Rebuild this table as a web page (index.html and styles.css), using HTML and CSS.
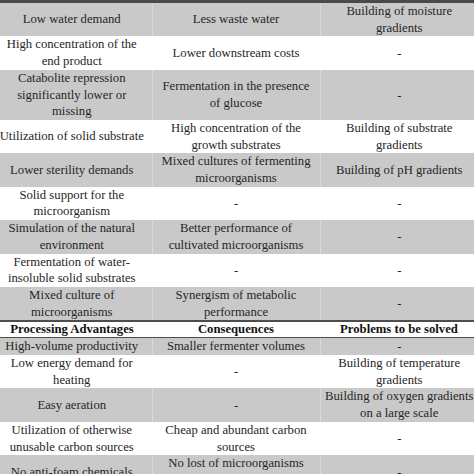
FILE: index.html
```html
<!DOCTYPE html>
<html>
<head>
<meta charset="utf-8">
<link rel="stylesheet" href="styles.css">
</head>
<body>
<div class="topbar"></div>
<table class="grid">
  <colgroup>
    <col class="c1"><col class="c2"><col class="c3">
  </colgroup>
  <tbody>
    <tr class="g"><td>Low water demand</td><td>Less waste water</td><td>Building of moisture<br>gradients</td></tr>
    <tr class="w"><td>High concentration of the<br>end product</td><td>Lower downstream costs</td><td>-</td></tr>
    <tr class="g"><td>Catabolite repression<br>significantly lower or<br>missing</td><td>Fermentation in the presence<br>of glucose</td><td>-</td></tr>
    <tr class="w"><td>Utilization of solid substrate</td><td>High concentration of the<br>growth substrates</td><td>Building of substrate<br>gradients</td></tr>
    <tr class="g"><td>Lower sterility demands</td><td>Mixed cultures of fermenting<br>microorganisms</td><td>Building of pH gradients</td></tr>
    <tr class="w"><td>Solid support for the<br>microorganism</td><td>-</td><td>-</td></tr>
    <tr class="g"><td>Simulation of the natural<br>environment</td><td>Better performance of<br>cultivated microorganisms</td><td>-</td></tr>
    <tr class="w"><td>Fermentation of water-<br>insoluble solid substrates</td><td>-</td><td>-</td></tr>
    <tr class="g"><td>Mixed culture of<br>microorganisms</td><td>Synergism of metabolic<br>performance</td><td>-</td></tr>
    <tr class="head"><th>Processing Advantages</th><th>Consequences</th><th>Problems to be solved</th></tr>
    <tr class="g"><td>High-volume productivity</td><td>Smaller fermenter volumes</td><td>-</td></tr>
    <tr class="w"><td>Low energy demand for<br>heating</td><td>-</td><td>Building of temperature<br>gradients</td></tr>
    <tr class="g"><td>Easy aeration</td><td>-</td><td>Building of oxygen gradients<br>on a large scale</td></tr>
    <tr class="w"><td>Utilization of otherwise<br>unusable carbon sources</td><td>Cheap and abundant carbon<br>sources</td><td>-</td></tr>
    <tr class="g"><td>No anti-foam chemicals</td><td>No lost of microorganisms<br>by foaming</td><td>-</td></tr>
  </tbody>
</table>
</body>
</html>
```

FILE: styles.css
```css
html, body {
  margin: 0;
  padding: 0;
  background: #ffffff;
  overflow: hidden;
  width: 474px;
  height: 474px;
}

.topbar {
  height: 3px;
  background: #4a4a4a;
}

.grid {
  border-collapse: collapse;
  table-layout: fixed;
  width: 486px;
  margin-left: -8px;
  font-family: "Liberation Serif", "Times New Roman", serif;
  font-size: 12.7px;
  line-height: 16.7px;
  color: #262626;
}

.c1 { width: 160px; }
.c2 { width: 168px; }
.c3 { width: 158px; }

.grid td, .grid th {
  padding: 0;
  text-align: center;
  vertical-align: middle;
  white-space: nowrap;
  overflow: visible;
}

.grid td + td {
  border-left: 1px solid rgba(255, 255, 255, 0.3);
}

.g { background: #c9c9c9; }
.w { background: #ffffff; }

.head th {
  font-weight: bold;
  color: #111111;
  line-height: 15px;
  background: #ffffff;
  border-top: 2px solid #4d4d4d;
  border-bottom: 1px solid #4d4d4d;
}
```
